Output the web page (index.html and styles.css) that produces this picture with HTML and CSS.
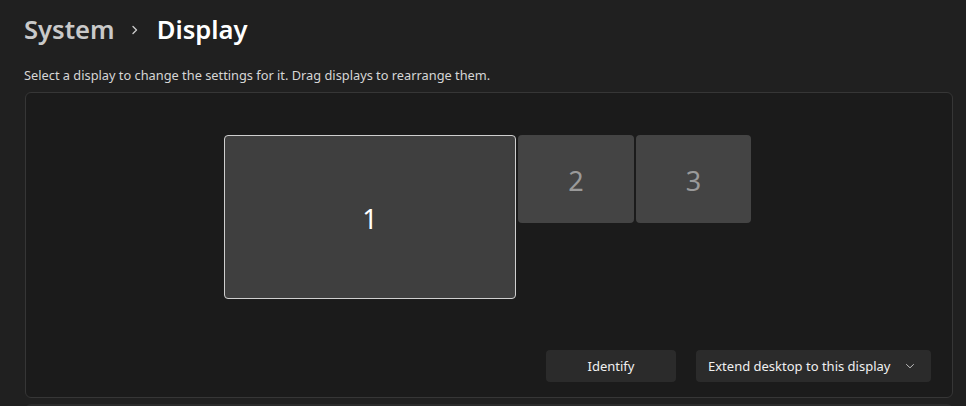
FILE: index.html
```html
<!DOCTYPE html>
<html>
<head>
    <title>Display</title>
<link rel="stylesheet" href="styles.css">
</head>
<body>
    <div class="page">
        <h1 class="crumbs">
            <span class="parent">System</span>
            <svg class="sep" width="10" height="12" viewBox="0 0 10 12"><path d="M3 2.5 L6.5 6 L3 9.5" fill="none" stroke="#c8c8c8" stroke-width="1.4" stroke-linecap="round" stroke-linejoin="round"/></svg>
            <span class="current">Display</span>
        </h1>

        <p class="hint">Select a display to change the settings for it. Drag displays to rearrange them.</p>

        <div class="panel">
            <div class="canvas">
                <div class="monitor main">1</div>
                <div class="monitor m2">2</div>
                <div class="monitor m3">3</div>
            </div>

            <div class="actions">
                <button class="btn identify">Identify</button>
                <button class="btn select">Extend desktop to this display
                    <svg width="10" height="8" viewBox="0 0 10 8"><path d="M1.5 2.5 L5 5.8 L8.5 2.5" fill="none" stroke="#bdbdbd" stroke-width="1" stroke-linecap="round" stroke-linejoin="round"/></svg>
                </button>
            </div>
        </div>

        <div class="next-panel"></div>
    </div>
</body>
</html>
```

FILE: styles.css
```css
body {
    margin: 0;
    padding: 0;
    background-color: #202020;
    font-family: "Noto Sans", "Open Sans", sans-serif;
    color: #fff;
    height: 406px;
    overflow: hidden;
}

.page {
    padding: 12px 13px 0 24px;
}

.crumbs {
    margin: 0;
    display: flex;
    align-items: center;
    font-size: 25.6px;
    font-weight: 600;
    line-height: 36px;
    height: 36px;
}

.parent {
    color: #c9c9c9;
}

.sep {
    margin: 0 17px 0 15px;
}

.current {
    color: #fff;
}

.hint {
    margin: 18px 0 0 0;
    font-size: 12.8px;
    line-height: 18px;
    color: #d6d6d6;
}

.panel {
    margin: 8px 0 0 1px;
    width: 926px;
    height: 304px;
    background-color: #1b1b1b;
    border: 1px solid #363636;
    border-radius: 6px;
    display: flex;
    flex-direction: column;
}

/* the arrangement area: monitors sit where the user dragged them */
.canvas {
    position: relative;
    flex: 1;
}

.monitor {
    position: absolute;
    display: flex;
    align-items: center;
    justify-content: center;
    background-color: #444;
    border-radius: 4px;
    font-size: 27px;
    line-height: 1;
    padding-top: 3px;
    color: #9a9a9a;
    box-sizing: border-box;
}

.monitor.main {
    left: 198px;
    top: 42px;
    width: 292px;
    height: 164px;
    background-color: #3f3f3f;
    border: 1px solid #cfcfcf;
    color: #fff;
}

.monitor.m2 {
    left: 492px;
    top: 42px;
    width: 116px;
    height: 88px;
}

.monitor.m3 {
    left: 610px;
    top: 42px;
    width: 115px;
    height: 88px;
}

.actions {
    display: flex;
    justify-content: flex-end;
    gap: 20px;
    padding: 0 21px 15px 0;
}

.btn {
    height: 32px;
    border: none;
    border-radius: 4px;
    background-color: #2b2b2b;
    color: #f0f0f0;
    font-family: inherit;
    font-size: 13px;
    padding: 0;
    cursor: pointer;
}

.identify {
    width: 130px;
}

.select {
    width: 235px;
    display: flex;
    align-items: center;
    padding: 0 16px 0 12px;
    justify-content: space-between;
}

.next-panel {
    margin: 6px 0 0 1px;
    width: 928px;
    height: 20px;
    background-color: #2b2b2b;
    border-radius: 6px 6px 0 0;
}
```
